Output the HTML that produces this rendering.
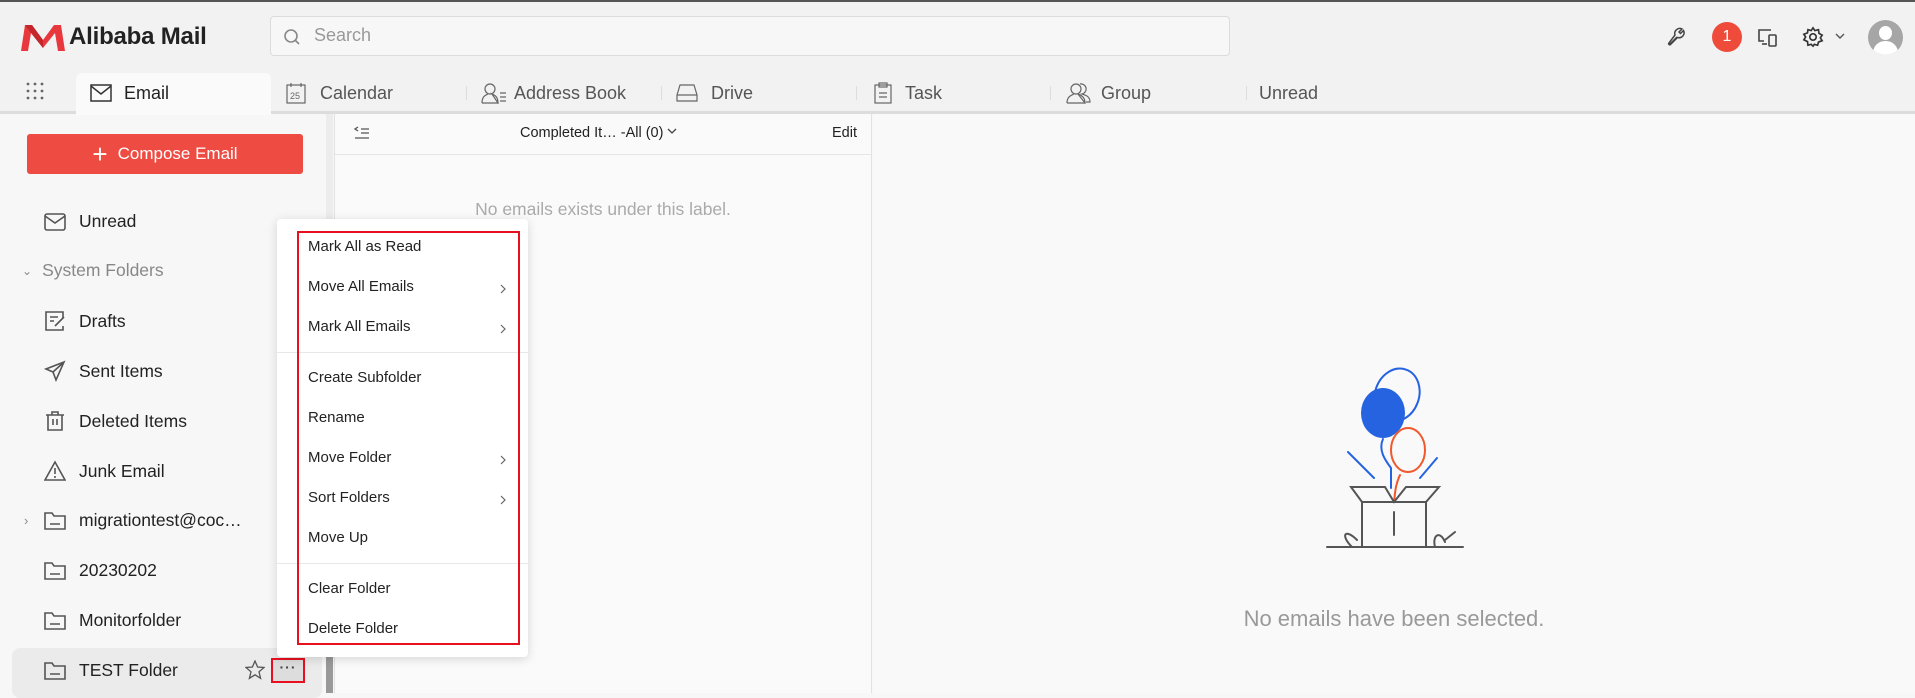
<!DOCTYPE html>
<html><head><meta charset="utf-8"><style>
*{box-sizing:border-box;margin:0;padding:0}
body{width:1915px;height:693px;overflow:hidden;background:#f7f7f7;font-family:"Liberation Sans",Arial,sans-serif;position:relative;color:#222}
.abs{position:absolute}
#top{left:0;top:0;width:1915px;height:114px;background:#f2f2f2;border-top:2px solid #555;border-bottom:3px solid #dcdcdc}
.tab{position:absolute;top:71px;height:40px;display:flex;align-items:center;font-size:18px;color:#555}
.sep{position:absolute;top:84px;width:1px;height:14px;background:#ddd}
.side{position:absolute;left:44px;display:flex;align-items:center;font-size:17.5px;color:#222}
.side svg{margin-right:13px}
.mi{position:absolute;left:308px;font-size:15px;color:#222}
.ch{position:absolute;left:500px}
</style></head><body>
<div id="top" class="abs">
 <svg class="abs" style="left:20px;top:22px" width="46" height="28" viewBox="0 0 46 28"><path d="M1 27 L5 1 L12 1 L23 16 L34 1 L41 1 L45 27 L38 27 L35 9 L23 24 L11 9 L8 27Z" fill="#e8383d"/><path d="M5 1 L12 1 L23 16 L23 24 L11 9Z" fill="#c4262b"/></svg>
 <div class="abs" style="left:69px;top:21px;font-size:24px;font-weight:bold;color:#222;letter-spacing:-0.2px">Alibaba Mail</div>
 <div class="abs" style="left:270px;top:14px;width:960px;height:40px;background:#f7f7f7;border:1px solid #dcdcdc;border-radius:4px"></div>
 <svg class="abs" style="left:283px;top:26px" width="18" height="18" viewBox="0 0 18 18" fill="none" stroke="#888" stroke-width="1.6"><circle cx="8" cy="8" r="6"/><path d="M12.5 12.5 L16 16"/></svg>
 <div class="abs" style="left:314px;top:23px;font-size:18px;color:#999">Search</div>
 <svg class="abs" style="left:1666px;top:24px" width="22" height="22" viewBox="0 0 22 22" fill="none" stroke="#444" stroke-width="1.5"><path d="M3 19 L11 11 M9 9 A5 5 0 0 1 16 3 L13 6 L14.5 7.5 L17.5 4.5 A5 5 0 0 1 11.5 11.5 L4.5 18.5 A1 1 0 0 1 3 17Z"/></svg>
 <div class="abs" style="left:1712px;top:20px;width:30px;height:30px;border-radius:50%;background:#ee4b3b;color:#fff;font-size:16px;text-align:center;line-height:30px">1</div>
 <svg class="abs" style="left:1757px;top:25px" width="22" height="20" viewBox="0 0 22 20" fill="none" stroke="#444" stroke-width="1.6"><path d="M14 3 H2 V14 H7"/><path d="M5 17 H10"/><rect x="12" y="8" width="7" height="11" rx="1"/></svg>
 <svg class="abs" style="left:1802px;top:24px" width="22" height="22" viewBox="0 0 24 24" fill="none" stroke="#333" stroke-width="1.8"><circle cx="12" cy="12" r="3.5"/><path d="M12 2 L14 5 L18 4 L18.5 8 L22 10 L20 13 L22 16 L18 17.5 L17 21 L13.5 20 L12 22 L10 20 L6.5 21 L6 17 L2 15 L4 12 L2 9 L6 7.5 L6.5 4 L10 5Z"/></svg>
 <svg class="abs" style="left:1835px;top:31px" width="10" height="7" viewBox="0 0 10 7" fill="none" stroke="#555" stroke-width="1.4"><path d="M1 1 L5 5 L9 1"/></svg>
 <div class="abs" style="left:1868px;top:18px;width:35px;height:35px;border-radius:50%;background:#a6a6a6;overflow:hidden"><div class="abs" style="left:11px;top:6px;width:13px;height:14px;border-radius:50%;background:#fff"></div><div class="abs" style="left:5px;top:21px;width:25px;height:16px;border-radius:12px 12px 0 0;background:#fff"></div></div>
 <svg class="abs" style="left:26px;top:80px" width="18" height="18" viewBox="0 0 18 18" fill="#666"><circle cx="2" cy="2" r="1.4"/><circle cx="9" cy="2" r="1.4"/><circle cx="16" cy="2" r="1.4"/><circle cx="2" cy="9" r="1.4"/><circle cx="9" cy="9" r="1.4"/><circle cx="16" cy="9" r="1.4"/><circle cx="2" cy="16" r="1.4"/><circle cx="9" cy="16" r="1.4"/><circle cx="16" cy="16" r="1.4"/></svg>
 <div class="abs" style="left:76px;top:71px;width:195px;height:42px;background:#fafafa;border-radius:6px 6px 0 0"></div>
 <div class="tab" style="left:90px;color:#222"><svg width="22" height="20" viewBox="0 0 22 20" fill="none" stroke="#333" stroke-width="1.5" style="margin-right:12px"><rect x="1" y="2" width="20" height="16"/><path d="M1 3 L11 11 L21 3"/></svg>Email</div>
 <div class="tab" style="left:286px"><svg width="20" height="22" viewBox="0 0 20 22" fill="none" stroke="#666" stroke-width="1.2" style="margin-right:14px"><rect x="1" y="3" width="18" height="18"/><path d="M5 1 V5 M15 1 V5"/><text x="4" y="17" font-size="9" fill="#666" stroke="none" font-family="Liberation Sans">25</text></svg>Calendar</div>
 <div class="tab" style="left:481px"><svg width="26" height="22" viewBox="0 0 26 22" fill="none" stroke="#666" stroke-width="1.2" style="margin-right:7px"><circle cx="9" cy="7" r="5"/><path d="M1 21 C1 14 5 13 7 12 M11 12 C13 13 17 14 17 21 Z M1 21 H17"/><path d="M19 11 H25 M19 15 H25 M19 19 H25"/></svg>Address Book</div>
 <div class="tab" style="left:676px"><svg width="22" height="20" viewBox="0 0 22 20" fill="none" stroke="#666" stroke-width="1.2" style="margin-right:13px"><path d="M1 12 L4 2 H18 L21 12 V18 H1Z M1 12 H21"/></svg>Drive</div>
 <div class="tab" style="left:874px"><svg width="18" height="22" viewBox="0 0 18 22" fill="none" stroke="#666" stroke-width="1.2" style="margin-right:13px"><rect x="1" y="3" width="16" height="18"/><rect x="5" y="1" width="8" height="4"/><path d="M5 11 H13 M5 15 H13"/></svg>Task</div>
 <div class="tab" style="left:1066px"><svg width="26" height="22" viewBox="0 0 26 22" fill="none" stroke="#666" stroke-width="1.2" style="margin-right:9px"><circle cx="10" cy="7" r="5"/><path d="M1 21 C1 14 6 13 8 12 M12 12 C14 13 19 14 19 21 Z M1 21 H19 M14 2 A5 5 0 0 1 16 12 C19 13 24 14 24 20 H20"/></svg>Group</div>
 <div class="tab" style="left:1259px">Unread</div>
 <div class="sep" style="left:466px"></div><div class="sep" style="left:661px"></div><div class="sep" style="left:856px"></div><div class="sep" style="left:1050px"></div><div class="sep" style="left:1246px"></div>
</div>
<!-- sidebar -->
<div class="abs" style="left:27px;top:134px;width:276px;height:40px;background:#ee4b43;border-radius:3px;color:#fff;font-size:17px;display:flex;align-items:center;justify-content:center"><span style="font-size:26px;margin-right:10px;font-weight:300;line-height:1">+</span>Compose Email</div>
<div class="side" style="top:211px"><svg width="22" height="20" viewBox="0 0 22 20" fill="none" stroke="#555" stroke-width="1.6"><rect x="1" y="2" width="20" height="16" rx="2"/><path d="M1 4 L11 11 L21 4"/></svg>Unread</div>
<div class="side" style="top:260px;left:22px;color:#888"><span style="font-size:12px;margin-right:10px">&#8964;</span>System Folders</div>
<div class="side" style="top:310px"><svg width="22" height="22" viewBox="0 0 22 22" fill="none" stroke="#555" stroke-width="1.6"><path d="M19 8 V2 H2 V20 H19 V16"/><path d="M6 7 H14 M6 11 H10 M11 16 L20 7"/></svg>Drafts</div>
<div class="side" style="top:360px"><svg width="22" height="22" viewBox="0 0 22 22" fill="none" stroke="#555" stroke-width="1.6"><path d="M20 2 L2 9 L9 12 L12 20 Z M9 12 L20 2"/></svg>Sent Items</div>
<div class="side" style="top:410px"><svg width="22" height="22" viewBox="0 0 22 22" fill="none" stroke="#555" stroke-width="1.6"><path d="M2 5 H20 M8 5 V2 H14 V5 M4 5 V20 H18 V5 M9 9 V15 M13 9 V15"/></svg>Deleted Items</div>
<div class="side" style="top:460px"><svg width="22" height="22" viewBox="0 0 22 22" fill="none" stroke="#555" stroke-width="1.6"><path d="M11 2 L21 20 H1Z M11 8 V14 M11 16 V18"/></svg>Junk Email</div>
<div class="abs" style="left:24px;top:513px;font-size:13px;color:#888">&#8250;</div>
<div class="side" style="top:510px"><svg width="22" height="20" viewBox="0 0 22 20" fill="none" stroke="#555" stroke-width="1.6"><path d="M1 2 H8 L10 5 H21 V18 H1Z M6 13 H16"/></svg>migrationtest@coc…</div>
<div class="side" style="top:560px"><svg width="22" height="20" viewBox="0 0 22 20" fill="none" stroke="#555" stroke-width="1.6"><path d="M1 2 H8 L10 5 H21 V18 H1Z M6 13 H16"/></svg>20230202</div>
<div class="side" style="top:610px"><svg width="22" height="20" viewBox="0 0 22 20" fill="none" stroke="#555" stroke-width="1.6"><path d="M1 2 H8 L10 5 H21 V18 H1Z M6 13 H16"/></svg>Monitorfolder</div>
<div class="abs" style="left:12px;top:648px;width:310px;height:50px;background:#ebebeb;border-radius:8px"></div>
<div class="side" style="top:660px"><svg width="22" height="20" viewBox="0 0 22 20" fill="none" stroke="#555" stroke-width="1.6"><path d="M1 2 H8 L10 5 H21 V18 H1Z M6 13 H16"/></svg>TEST Folder</div>
<svg class="abs" style="left:245px;top:660px" width="20" height="20" viewBox="0 0 20 20" fill="none" stroke="#555" stroke-width="1.3"><path d="M10 1 L12.6 7 L19 7.5 L14 11.8 L15.6 18.3 L10 14.8 L4.4 18.3 L6 11.8 L1 7.5 L7.4 7Z"/></svg>
<div class="abs" style="left:271px;top:658px;width:34px;height:25px;border:2px solid #e8101f;background:#ddd;text-align:center;font-size:14px;line-height:14px;color:#444;font-weight:bold;letter-spacing:1px">···</div>
<div class="abs" style="left:326px;top:114px;width:7px;height:579px;background:#ececec"></div>
<div class="abs" style="left:326px;top:640px;width:7px;height:53px;background:#999"></div>
<!-- middle -->
<div class="abs" style="left:334px;top:114px;width:538px;height:579px;background:#fafafa;border-left:1px solid #e2e2e2;border-right:1px solid #e2e2e2"></div>
<div class="abs" style="left:335px;top:154px;width:536px;height:1px;background:#e6e6e6"></div>
<svg class="abs" style="left:354px;top:126px" width="16" height="14" viewBox="0 0 16 14" fill="none" stroke="#555" stroke-width="1.3"><path d="M4 1 L1 3 L4 5 M7 3 H15 M7 7 H15 M1 12 H15"/></svg>
<div class="abs" style="left:520px;top:125px;font-size:14.5px;color:#222">Completed It… -All (0) <svg width="10" height="7" viewBox="0 0 10 7" fill="none" stroke="#444" stroke-width="1.3" style="vertical-align:2px"><path d="M1 1 L5 5 L9 1"/></svg></div>
<div class="abs" style="left:832px;top:125px;font-size:14.5px;color:#222">Edit</div>
<div class="abs" style="left:335px;top:199px;width:536px;text-align:center;font-size:17.5px;color:#aaa">No emails exists under this label.</div>
<!-- right -->
<div class="abs" style="left:873px;top:114px;width:1042px;height:579px;background:#f9f9f9"></div>
<svg class="abs" style="left:1300px;top:350px" width="300" height="220" viewBox="0 0 300 220" fill="none" stroke-linecap="round">
 <ellipse cx="97" cy="45" rx="22" ry="27" transform="rotate(20 97 45)" stroke="#2563e0" stroke-width="2"/>
 <ellipse cx="83" cy="63" rx="22" ry="25" fill="#2563e0"/>
 <path d="M83 89 C78 100 85 110 91 118 V138" stroke="#2563e0" stroke-width="2"/>
 <ellipse cx="108" cy="100" rx="17" ry="22" stroke="#f0582e" stroke-width="2"/>
 <path d="M100 125 C95 135 95 145 94 152" stroke="#f0582e" stroke-width="2"/>
 <path d="M48 102 L74 128 M137 108 L120 128" stroke="#2563e0" stroke-width="2"/>
 <path d="M51 137 H85 L94 152 L106 137 H139 L126 152 H62Z M62 152 V197 M126 152 V197 M94 162 V185" stroke="#555" stroke-width="2"/>
 <path d="M27 197 H163 M52 197 C40 185 45 178 57 190 M135 197 C132 185 140 180 145 192 M145 190 L155 182" stroke="#555" stroke-width="2"/>
</svg>
<div class="abs" style="left:873px;top:606px;width:1042px;text-align:center;font-size:22px;color:#999">No emails have been selected.</div>
<!-- menu -->
<div class="abs" style="left:277px;top:219px;width:251px;height:438px;background:#fff;border-radius:4px;box-shadow:0 2px 10px rgba(0,0,0,.15)"></div>
<div class="abs" style="left:277px;top:352px;width:251px;height:1px;background:#e8e8e8"></div>
<div class="abs" style="left:277px;top:563px;width:251px;height:1px;background:#e8e8e8"></div>
<div class="abs" style="left:297px;top:231px;width:223px;height:414px;border:2px solid #e8101f"></div>
<div class="mi" style="top:238px">Mark All as Read</div>
<div class="mi" style="top:278px">Move All Emails</div>
<div class="mi" style="top:318px">Mark All Emails</div>
<div class="mi" style="top:369px">Create Subfolder</div>
<div class="mi" style="top:409px">Rename</div>
<div class="mi" style="top:449px">Move Folder</div>
<div class="mi" style="top:489px">Sort Folders</div>
<div class="mi" style="top:529px">Move Up</div>
<div class="mi" style="top:580px">Clear Folder</div>
<div class="mi" style="top:620px">Delete Folder</div>
<svg class="abs ch" style="top:284px" width="6" height="10" viewBox="0 0 6 10" fill="none" stroke="#666" stroke-width="1.2"><path d="M1 1 L5 5 L1 9"/></svg>
<svg class="abs ch" style="top:324px" width="6" height="10" viewBox="0 0 6 10" fill="none" stroke="#666" stroke-width="1.2"><path d="M1 1 L5 5 L1 9"/></svg>
<svg class="abs ch" style="top:455px" width="6" height="10" viewBox="0 0 6 10" fill="none" stroke="#666" stroke-width="1.2"><path d="M1 1 L5 5 L1 9"/></svg>
<svg class="abs ch" style="top:495px" width="6" height="10" viewBox="0 0 6 10" fill="none" stroke="#666" stroke-width="1.2"><path d="M1 1 L5 5 L1 9"/></svg>
</body></html>
